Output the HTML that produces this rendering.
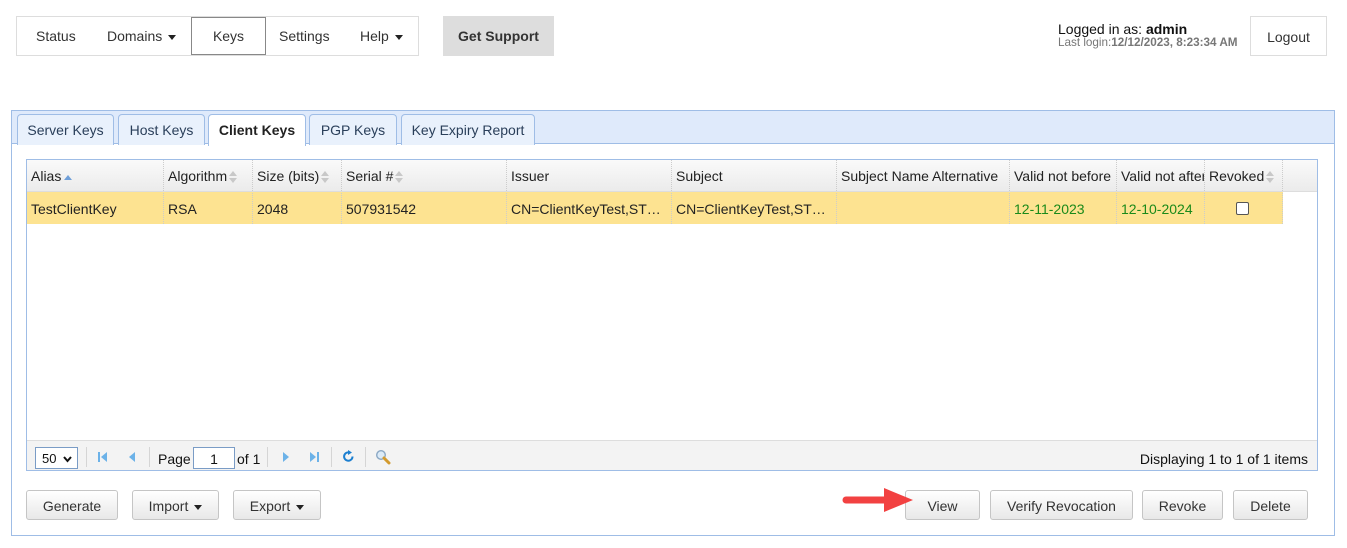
<!DOCTYPE html>
<html><head><style>
*{box-sizing:border-box}
body{margin:0;width:1347px;height:548px;background:#fff;font-family:"Liberation Sans",Arial,sans-serif;font-size:14px;color:#333;position:relative;overflow:hidden}
.a{position:absolute}
.nav{left:16px;top:16px;width:403px;height:40px;border:1px solid #ddd}
.ni{position:absolute;top:11px;color:#333}
.car{display:inline-block;width:0;height:0;border-left:4px solid transparent;border-right:4px solid transparent;border-top:5px solid #222;vertical-align:middle;margin-left:6px}
.panel{left:11px;top:110px;width:1324px;height:426px;border:1px solid #9fbde6}
.tabbar{left:12px;top:111px;width:1322px;height:33px;background:#dfeafb;border-bottom:1px solid #9fbde6}
.tab{position:absolute;top:114px;height:31px;border:1px solid #9fbde6;border-bottom:none;border-radius:4px 4px 0 0;background:#e9f1fc;color:#2a3f5a;padding-top:7px;text-align:center}
.grid{left:26px;top:159px;width:1292px;height:312px;border:1px solid #9fbde6}
.hd{position:absolute;top:160px;height:32px;background:linear-gradient(#fafafa,#ebebeb);border-bottom:1px solid #ddd}
.c{position:absolute;height:31px;padding:8px 0 0 4px;white-space:nowrap;overflow:hidden;border-right:1px dotted #ccc;color:#222}
.row{position:absolute;left:27px;top:192px;width:1256px;height:32px;background:#fde391}
.sort{display:inline-block;vertical-align:middle;margin-left:2px;width:9px;height:12px;position:relative}
.sort:before{content:"";position:absolute;left:0;top:0;border-left:4.5px solid transparent;border-right:4.5px solid transparent;border-bottom:5px solid #c8c8c8}
.sort:after{content:"";position:absolute;left:0;top:7px;border-left:4.5px solid transparent;border-right:4.5px solid transparent;border-top:5px solid #c8c8c8}
.up{display:inline-block;vertical-align:middle;margin-left:3px;border-left:4.5px solid transparent;border-right:4.5px solid transparent;border-bottom:5px solid #6f9fd8}
.pager{left:27px;top:440px;width:1290px;height:30px;background:#f3f3f3;border-top:1px solid #ddd}
.btn{position:absolute;top:490px;height:30px;border:1px solid #c5c5c5;border-radius:3px;background:linear-gradient(#fff,#e8e8e8);text-align:center;padding-top:7px;color:#333}
.sep{position:absolute;top:6px;width:1px;height:20px;background:#d5d5d5}
</style></head><body>
<div class="a nav">
<span class="ni" style="left:19px">Status</span>
<span class="ni" style="left:90px">Domains<span class="car"></span></span>
<div class="a" style="left:174px;top:0;width:75px;height:38px;border:1px solid #888;text-align:center;padding-top:10px">Keys</div>
<span class="ni" style="left:262px">Settings</span>
<span class="ni" style="left:343px">Help<span class="car"></span></span>
</div>
<div class="a" style="left:443px;top:16px;width:111px;height:40px;background:#ddd;font-weight:bold;text-align:center;padding-top:12px">Get Support</div>
<div class="a" style="left:1058px;top:21px;color:#111">Logged in as: <b>admin</b></div>
<div class="a" style="left:1058px;top:36px;font-size:11.7px;color:#777">Last login:<b>12/12/2023, 8:23:34 AM</b></div>
<div class="a" style="left:1250px;top:16px;width:77px;height:40px;border:1px solid #ddd;text-align:center;padding-top:12px">Logout</div>

<div class="a panel"></div>
<div class="a tabbar"></div>
<div class="tab" style="left:17px;width:97px">Server Keys</div>
<div class="tab" style="left:118px;width:87px">Host Keys</div>
<div class="tab" style="left:208px;width:98px;height:32px;background:#fff;font-weight:bold;color:#222">Client Keys</div>
<div class="tab" style="left:309px;width:88px">PGP Keys</div>
<div class="tab" style="left:401px;width:134px">Key Expiry Report</div>

<div class="a grid"></div>
<div class="hd" style="left:27px;width:1290px"></div>
<div class="c" style="top:160px;left:27px;width:137px">Alias<span class="up"></span></div>
<div class="c" style="top:160px;left:164px;width:89px">Algorithm<span class="sort"></span></div>
<div class="c" style="top:160px;left:253px;width:89px">Size (bits)<span class="sort"></span></div>
<div class="c" style="top:160px;left:342px;width:165px">Serial #<span class="sort"></span></div>
<div class="c" style="top:160px;left:507px;width:165px">Issuer</div>
<div class="c" style="top:160px;left:672px;width:165px">Subject</div>
<div class="c" style="top:160px;left:837px;width:173px">Subject Name Alternative</div>
<div class="c" style="top:160px;left:1010px;width:107px">Valid not before</div>
<div class="c" style="top:160px;left:1117px;width:88px">Valid not after</div>
<div class="c" style="top:160px;left:1205px;width:78px">Revoked<span class="sort"></span></div>
<div class="row"></div>
<div class="c" style="top:193px;left:27px;width:137px">TestClientKey</div>
<div class="c" style="top:193px;left:164px;width:89px">RSA</div>
<div class="c" style="top:193px;left:253px;width:89px">2048</div>
<div class="c" style="top:193px;left:342px;width:165px">507931542</div>
<div class="c" style="top:193px;left:507px;width:165px">CN=ClientKeyTest,ST…</div>
<div class="c" style="top:193px;left:672px;width:165px">CN=ClientKeyTest,ST…</div>
<div class="c" style="top:193px;left:837px;width:173px"></div>
<div class="c" style="top:193px;left:1010px;width:107px;color:#1a8a1a">12-11-2023</div>
<div class="c" style="top:193px;left:1117px;width:88px;color:#1a8a1a">12-10-2024</div>
<div class="c" style="top:193px;left:1205px;width:78px"><span style="display:inline-block;margin-left:27px;margin-top:1px;width:13px;height:13px;border:1px solid #555;border-radius:2px;background:#fff"></span></div>

<div class="a pager">
<div class="a" style="left:8px;top:6px;width:43px;height:22px;border:1px solid #7a9cc6;background:#fff;padding:3px 0 0 6px;font-size:13px;color:#111">50 <svg width="9" height="7" style="margin-left:3px"><path d="M1 1 L4.5 5 L8 1" stroke="#111" stroke-width="2" fill="none"/></svg></div>
<div class="sep" style="left:59px"></div>
<svg class="a" style="left:70px;top:10px" width="12" height="12"><rect x="1" y="1" width="2" height="10" fill="#6cb2e8"/><path d="M10 1 L4 6 L10 11Z" fill="#6cb2e8"/></svg>
<svg class="a" style="left:100px;top:10px" width="10" height="12"><path d="M8 1 L2 6 L8 11Z" fill="#6cb2e8"/></svg>
<div class="sep" style="left:122px"></div>
<span class="a" style="left:131px;top:10px;color:#111">Page</span>
<div class="a" style="left:166px;top:6px;width:42px;height:22px;border:1px solid #7a9cc6;background:#fff;text-align:center;padding-top:3px;color:#111">1</div>
<span class="a" style="left:210px;top:10px;color:#111">of 1</span>
<div class="sep" style="left:240px"></div>
<svg class="a" style="left:254px;top:10px" width="10" height="12"><path d="M2 1 L8 6 L2 11Z" fill="#6cb2e8"/></svg>
<svg class="a" style="left:281px;top:10px" width="12" height="12"><path d="M2 1 L8 6 L2 11Z" fill="#6cb2e8"/><rect x="9" y="1" width="2" height="10" fill="#6cb2e8"/></svg>
<div class="sep" style="left:304px"></div>
<svg class="a" style="left:315px;top:9px" width="13" height="13"><path d="M10.5 6.5 A4.2 4.2 0 1 1 7 2.4" stroke="#1c7fd0" stroke-width="2" fill="none"/><path d="M6 0 L10 2.5 L6 5Z" fill="#1c7fd0"/></svg>
<div class="sep" style="left:338px"></div>
<svg class="a" style="left:348px;top:8px" width="16" height="16"><circle cx="6" cy="6" r="4.3" fill="#dbeaf7" stroke="#8aa7c4" stroke-width="1.4"/><path d="M9 9 L14 14" stroke="#d39a2e" stroke-width="3" stroke-linecap="round"/></svg>
<span class="a" style="right:9px;top:10px;color:#111">Displaying 1 to 1 of 1 items</span>
</div>

<div class="btn" style="left:26px;width:92px">Generate</div>
<div class="btn" style="left:132px;width:87px">Import<span class="car"></span></div>
<div class="btn" style="left:233px;width:88px">Export<span class="car"></span></div>
<div class="btn" style="left:905px;width:75px">View</div>
<div class="btn" style="left:990px;width:143px">Verify Revocation</div>
<div class="btn" style="left:1142px;width:81px">Revoke</div>
<div class="btn" style="left:1233px;width:75px">Delete</div>
<svg class="a" style="left:840px;top:486px" width="75" height="32"><path d="M6 14 H46" stroke="#f24141" stroke-width="7" stroke-linecap="round"/><path d="M44 2 L73 14 L44 26 Z" fill="#f24141"/></svg>
</body></html>
